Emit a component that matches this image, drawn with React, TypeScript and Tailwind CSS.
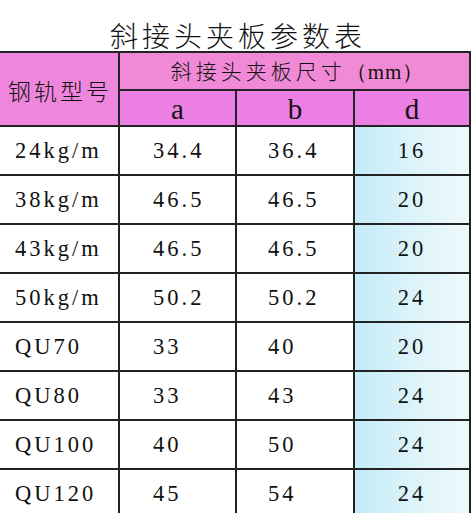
const rows = [
  ["24kg/m", "34.4", "36.4", "16"],
  ["38kg/m", "46.5", "46.5", "20"],
  ["43kg/m", "46.5", "46.5", "20"],
  ["50kg/m", "50.2", "50.2", "24"],
  ["QU70", "33", "40", "20"],
  ["QU80", "33", "43", "24"],
  ["QU100", "40", "50", "24"],
  ["QU120", "45", "54", "24"],
];

const serif = "font-['Liberation_Serif','Noto_Sans_CJK_SC',serif]";
const cjk = "font-['Noto_Sans_CJK_SC',sans-serif]";

export default function App() {
  return (
    <div className="w-[474px] h-[513px] overflow-hidden bg-white text-[#111]">
      {/* title */}
      <div className={`h-[51px] flex items-end justify-center pl-[2px] pb-[2px] ${cjk} text-[28px] leading-none tracking-[4px] font-light`}>
        斜接头夹板参数表
      </div>

      <table className="border-collapse table-fixed w-[471px] -ml-[2px]">
        <colgroup>
          <col className="w-[120px]" />
          <col className="w-[117px]" />
          <col className="w-[118px]" />
          <col className="w-[116px]" />
        </colgroup>
        <thead>
          <tr className="h-[37px]">
            <th
              rowSpan={2}
              className={`border-2 border-[#222] bg-[#ee86dd] ${cjk} text-[23px] font-light tracking-[3px] text-left pl-[8px] pt-[2px]`}
            >
              钢轨型号
            </th>
            <th colSpan={3} className={`border-2 border-[#222] bg-[#f08ad6] ${cjk} text-[21px] font-light tracking-[4px] pt-[2px] pl-[6px]`}>
              斜接头夹板尺寸
              <span className="font-['Liberation_Serif',serif] tracking-[1px]">（mm）</span>
            </th>
          </tr>
          <tr className="h-[36px]">
            {["a", "b", "d"].map((c) => (
              <th key={c} className={`border-2 border-[#222] bg-[#eb7fe3] ${serif} text-[29px] font-normal leading-none pt-[4px]`}>
                {c}
              </th>
            ))}
          </tr>
        </thead>
        <tbody>
          {rows.map((r, i) => (
            <tr key={i} className="h-[49px]">
              <td className={`border-2 border-[#222] ${serif} text-[22.5px] tracking-[3px] pl-[15px] pt-[2px]`}>{r[0]}</td>
              <td className={`border-2 border-[#222] ${serif} text-[22.5px] tracking-[3px] pl-[33px] pt-[2px]`}>{r[1]}</td>
              <td className={`border-2 border-[#222] ${serif} text-[22.5px] tracking-[3px] pl-[31px] pt-[2px]`}>{r[2]}</td>
              <td className={`border-2 border-[#222] bg-gradient-to-r from-[#c3ebf8] via-[#dcf3fa] to-[#eef9fc] ${serif} text-[22.5px] tracking-[3px] text-center pt-[2px]`}>
                {r[3]}
              </td>
            </tr>
          ))}
        </tbody>
      </table>
    </div>
  );
}
